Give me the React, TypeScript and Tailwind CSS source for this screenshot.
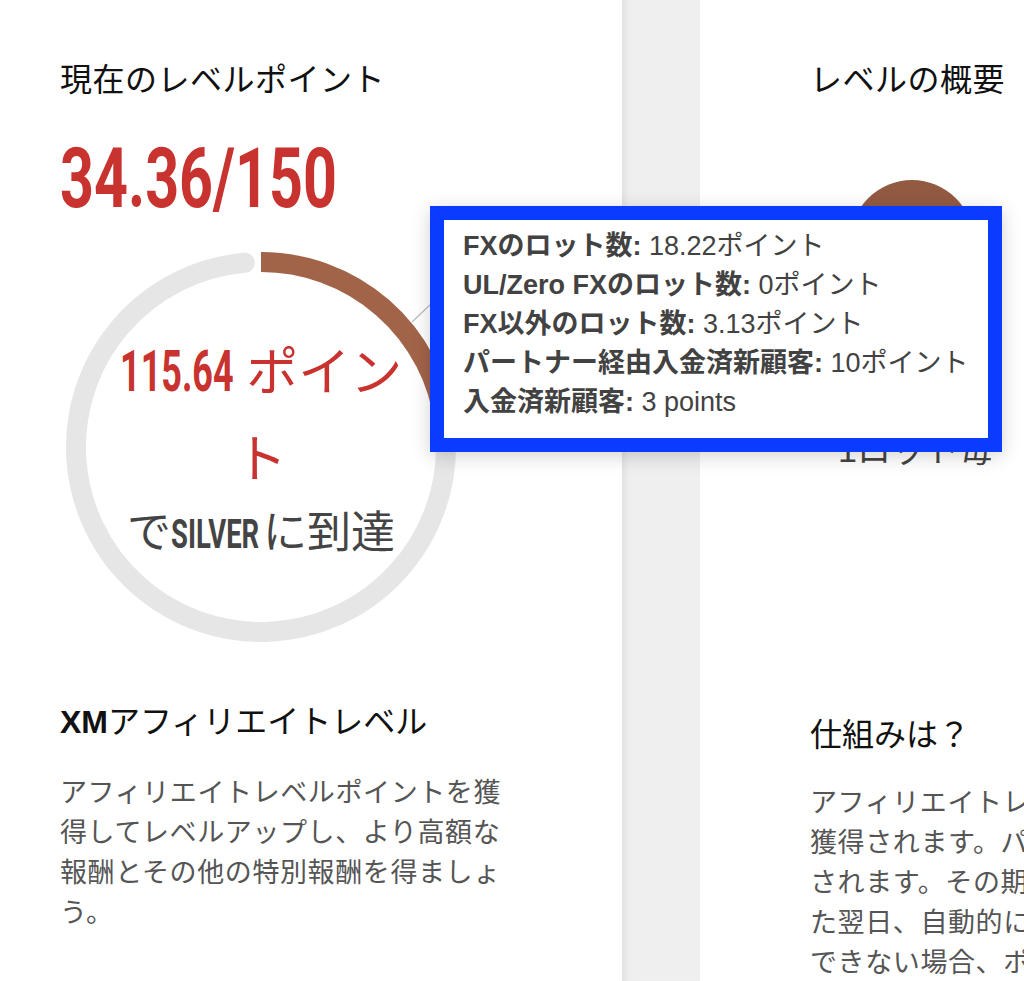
const jp = "font-['Liberation_Sans','Noto_Sans_CJK_JP',sans-serif]";
const num = "font-['Roboto','Liberation_Sans',sans-serif] font-bold";

function pt(a: number): [number, number] {
  const r = 185;
  const rad = (a * Math.PI) / 180;
  return [196 + r * Math.sin(rad), 196 - r * Math.cos(rad)];
}

function arc(a0: number, a1: number) {
  const [x0, y0] = pt(a0);
  const [x1, y1] = pt(a1);
  const large = a1 - a0 > 180 ? 1 : 0;
  return `M ${x0} ${y0} A 185 185 0 ${large} 1 ${x1} ${y1}`;
}

function Gauge() {
  const progress = (34.36 / 150) * 360;
  return (
    <div className="mt-[30px] grid w-[392px] ml-[5px]">
      <svg className="col-start-1 row-start-1" width="392" height="392" viewBox="0 0 392 392">
        <path d={arc(progress + 6, 355)} fill="none" stroke="#e6e6e6" strokeWidth="20" strokeLinecap="round" />
        <path d={arc(0, progress)} fill="none" stroke="#a26449" strokeWidth="20" />
        <line x1="347" y1="71" x2="366" y2="53" stroke="#bdbdbd" strokeWidth="1.2" />
      </svg>
      <div className="col-start-1 row-start-1 flex flex-col items-center pt-[77px] text-center">
        <div className={`whitespace-nowrap text-[52px] leading-[87px] text-[#c8322f] ${jp}`}>
          <span className="inline-block w-[112px]">
            <span className={`inline-block origin-left scale-x-[0.62] text-[58px] ${num}`}>115.64</span>
          </span>
          {" "}ポイン
        </div>
        <div className={`text-[52px] leading-[87px] text-[#c8322f] ${jp}`}>ト</div>
        <div className={`whitespace-nowrap text-[44px] leading-[58px] text-[#444444] ${jp}`}>
          で
          <span className="inline-block w-[92px]">
            <span className={`inline-block origin-left scale-x-[0.67] text-[41px] ${num}`}>SILVER</span>
          </span>
          に到達
        </div>
      </div>
    </div>
  );
}

function Tooltip() {
  const rows: [string, string][] = [
    ["FXのロット数:", "18.22ポイント"],
    ["UL/Zero FXのロット数:", "0ポイント"],
    ["FX以外のロット数:", "3.13ポイント"],
    ["パートナー経由入金済新顧客:", "10ポイント"],
    ["入金済新顧客:", "3 points"],
  ];
  return (
    <div className="absolute left-[430px] top-[206px] h-[246px] w-[572px] border-[14px] border-[#0a3cff] bg-white shadow-[0_4px_18px_rgba(0,0,0,0.18)]">
      <div className={`pl-[19px] pt-[7px] text-[27px] leading-[39px] text-[#424242] ${jp}`}>
        {rows.map(([k, v]) => (
          <div key={k} className="whitespace-nowrap">
            <span className="font-bold">{k}</span> {v}
          </div>
        ))}
      </div>
    </div>
  );
}

export default function App() {
  return (
    <div className={`relative flex h-[981px] w-[1024px] overflow-hidden bg-white ${jp}`}>
      <div className="w-[622px] shrink-0 pl-[60px] pt-[60px]">
        <h1 className="text-[32px] font-normal leading-[40px] tracking-[0.5px] text-[#111111]">現在のレベルポイント</h1>
        <div className="mt-[37px] h-[84px] whitespace-nowrap">
          <span className={`inline-block origin-left scale-x-[0.705] text-[84px] leading-[84px] text-[#c8322f] ${num}`}>
            34.36/150
          </span>
        </div>
        <Gauge />
        <h2 className="mt-[59px] text-[32px] font-normal leading-[40px] text-[#111111]">
          <span className="font-bold">XM</span>アフィリエイトレベル
        </h2>
        <p className="mt-[31px] w-[450px] text-[27px] leading-[40px] tracking-[0.6px] text-[#555555]">
          アフィリエイトレベルポイントを獲得してレベルアップし、より高額な報酬とその他の特別報酬を得ましょう。
        </p>
      </div>

      <div className="w-[78px] shrink-0 bg-[#efefef] shadow-[inset_8px_0_8px_-6px_rgba(0,0,0,0.08)]" />

      <div className="min-w-0 flex-1 pl-[110px] pt-[60px]">
        <h2 className="whitespace-nowrap text-[32px] font-normal leading-[40px] tracking-[0.5px] text-[#111111]">レベルの概要</h2>
        <div className="ml-[40px] mt-[80px] h-[124px] w-[124px] rounded-full bg-[#935a42]" />
        <div className="ml-[28px] mt-[126px] whitespace-nowrap text-[34px] leading-[40px] text-[#444444]">1ロット毎</div>
        <h2 className="mt-[245px] whitespace-nowrap text-[32px] font-normal leading-[40px] text-[#111111]">仕組みは？</h2>
        <div className="mt-[28px] text-[27px] leading-[40px] tracking-[0.6px] text-[#555555]">
          <div className="whitespace-nowrap">アフィリエイトレベルポイントは取引により</div>
          <div className="whitespace-nowrap">獲得されます。パートナー経由の新顧客も加算</div>
          <div className="whitespace-nowrap">されます。その期間のポイントは期間が終了し</div>
          <div className="whitespace-nowrap">た翌日、自動的にリセットされます。維持</div>
          <div className="whitespace-nowrap">できない場合、ポイントは失われます。</div>
        </div>
      </div>

      <Tooltip />
    </div>
  );
}
